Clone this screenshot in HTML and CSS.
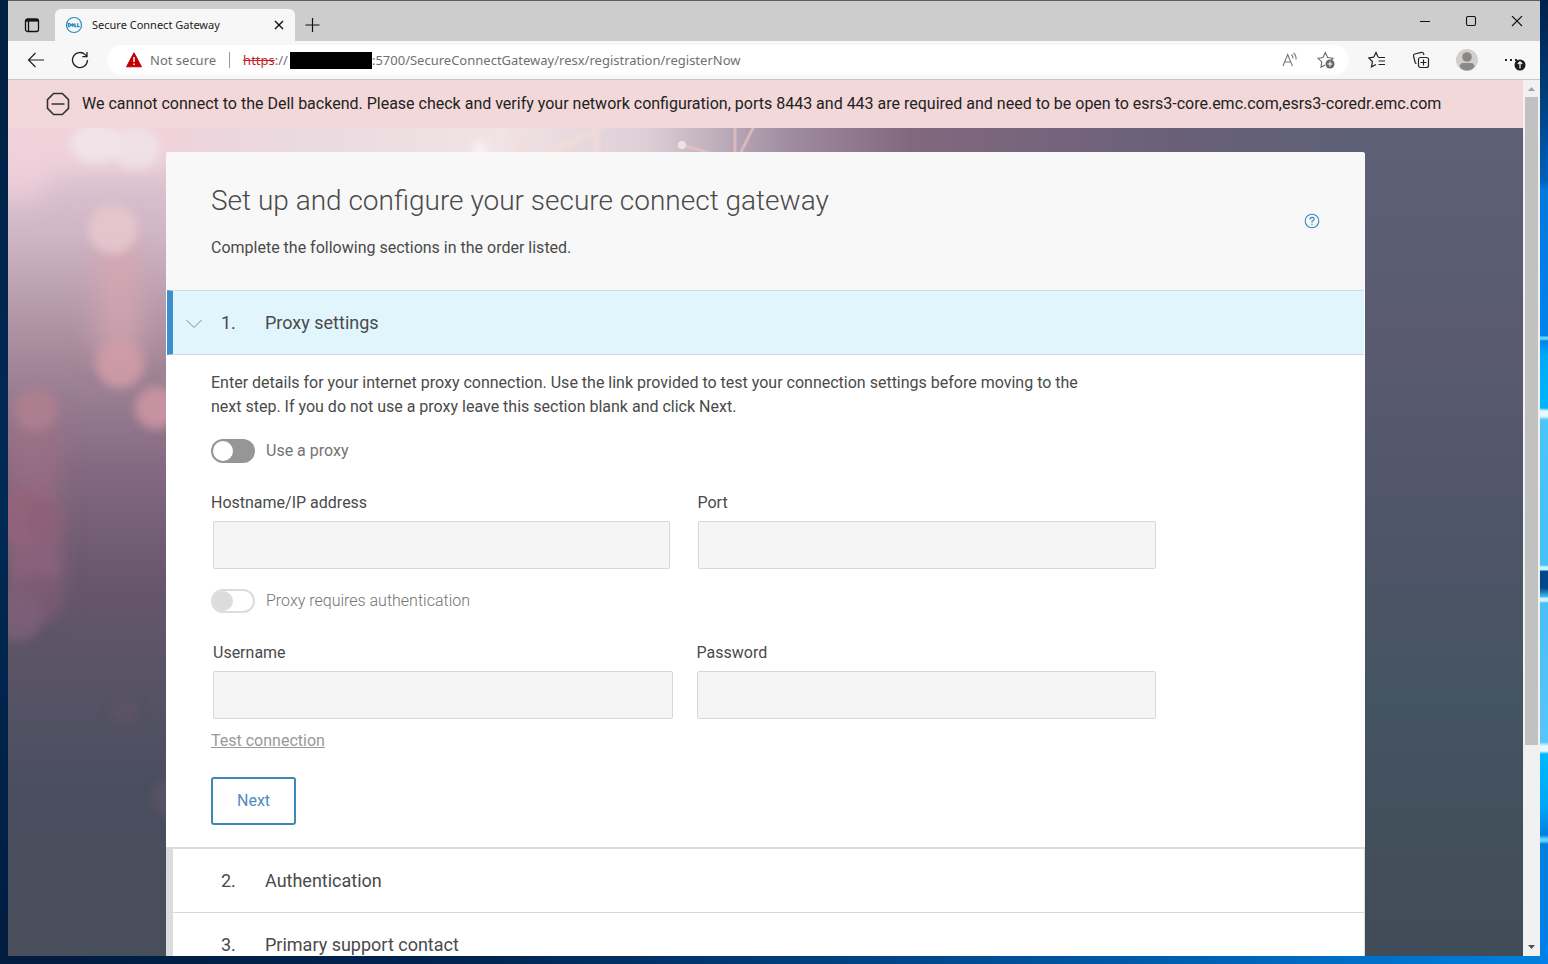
FILE: index.html
```html
<!DOCTYPE html>
<html lang="en">
<head>
    <title>Secure Connect Gateway</title>
    <meta charset="UTF-8">
    <link rel="stylesheet" href="styles.css">
</head>
<body>
    <div class="window">
        <div class="tab-bar">
            <button class="icon-btn tab-actions" aria-label="Tab actions">
                <svg width="16" height="16" viewBox="0 0 16 16" fill="none" stroke="#111" stroke-width="1.3"><rect x="1.5" y="2" width="13" height="12.5" rx="2"/><path d="M2 3.4h12" stroke-width="2.4"/><path d="M4.5 4v10"/></svg>
            </button>
            <div class="tab">
                <svg class="favicon" width="18" height="18" viewBox="0 0 18 18" fill="none" stroke="#2a8cc4"><circle cx="9" cy="9" r="7.5" stroke-width="1.2"/><path stroke-width="1.3" d="M3.4 7.3v3.4h.7q1.4-.2 1.4-1.7t-1.4-1.700zM6.200 9l1.900-1.500M6.200 9l2 1.600M6.800 9.700l2-1.600M7 7.800l2.500 2M10 7.200v3.500h1.700M12.700 7.200v3.500h2"/></svg>
                <span class="tab-title">Secure Connect Gateway</span>
                <button class="icon-btn" aria-label="Close tab">
                    <svg width="16" height="16" viewBox="0 0 16 16" stroke="#111" stroke-width="1.4"><path d="M4 4l8 8M12 4l-8 8"/></svg>
                </button>
            </div>
            <button class="icon-btn new-tab" aria-label="New tab">
                <svg width="16" height="16" viewBox="0 0 16 16" stroke="#111" stroke-width="1.2"><path d="M7.500 1v14M.5 8h14"/></svg>
            </button>
            <div class="window-controls">
                <button class="icon-btn" aria-label="Minimize"><svg width="12" height="12" viewBox="0 0 12 12" stroke="#111"><path d="M1 5.500h10"/></svg></button>
                <button class="icon-btn" aria-label="Maximize"><svg width="12" height="12" viewBox="0 0 12 12" fill="none" stroke="#111" stroke-width="1.1"><rect x="1.500" y=".5" width="9" height="9" rx="1.500"/></svg></button>
                <button class="icon-btn" aria-label="Close"><svg width="12" height="12" viewBox="0 0 12 12" stroke="#111" stroke-width="1.1"><path d="M1 0l10 10M11 0L1 10"/></svg></button>
            </div>
        </div>

        <div class="toolbar">
            <button class="icon-btn" aria-label="Back">
                <svg width="18" height="18" viewBox="0 0 18 18" fill="none" stroke="#222" stroke-width="1.200"><path d="M17 9H1.500M8.500 2l-7 7 7 7"/></svg>
            </button>
            <button class="icon-btn reload" aria-label="Reload">
                <svg width="18" height="18" viewBox="0 0 18 18" fill="none" stroke="#222" stroke-width="1.300"><path d="M16.500 9A7.500 7.500 0 1 1 14.200 3.600L16 5.500M16 1v4.700h-4.700"/></svg>
            </button>
            <div class="address-bar">
                <svg width="16" height="16" viewBox="0 0 16 16"><path d="M8 .8L15.500 14.800H.5z" fill="#c00000" stroke="#c00000" stroke-linejoin="round"/><path d="M8 5v5M8 11.500v1.500" stroke="#fff" stroke-width="1.500"/></svg>
                <span class="not-secure">Not secure</span>
                <span class="url"><s>https</s>://<span class="redacted"></span>:5700/SecureConnectGateway/resx/registration/registerNow</span>
                <button class="icon-btn" aria-label="Read aloud">
                    <svg width="18" height="18" viewBox="0 0 18 18" fill="none" stroke="#777" stroke-width="1.100"><path d="M2 15L6.700 3.500 11.400 15M3.600 11h6.200M10.500 3.500q1.700 1.500 1.500 4M12.500 2q3 2.500 2.500 6.500"/></svg>
                </button>
                <button class="icon-btn" aria-label="Add to favorites">
                    <svg width="18" height="18" viewBox="0 0 18 18" fill="none" stroke="#666" stroke-width="1.100"><path d="M8 14l-4 2.200.8-5.300L1 7.300l5-.8L8.300 1.500l2.300 5 5.400.8-2 2"/><circle cx="13" cy="13" r="4.500" fill="#666" stroke="none"/><path d="M13 10.500v5M10.500 13h5" stroke="#fff"/></svg>
                </button>
            </div>
            <div class="toolbar-actions">
                <button class="icon-btn" aria-label="Favorites">
                    <svg width="18" height="18" viewBox="0 0 18 18" fill="none" stroke="#222" stroke-width="1.200"><path d="M10 6L8 1.500 5.700 6.200.8 7l3.600 3.500-.9 5.300L8 13.500M10 6.500h7M10.500 10h6.500M10.500 13.500h6.500"/></svg>
                </button>
                <button class="icon-btn" aria-label="Collections">
                    <svg width="18" height="18" viewBox="0 0 18 18" fill="none" stroke="#222" stroke-width="1.200"><rect x="6.500" y="6.500" width="10" height="10" rx="2"/><path d="M11.500 8.500v6M8.500 11.500h6M4.500 12.500L3.300 12 1.500 5q-.3-1.500 1.200-2L9.500 1.300q1.500-.3 2 1.200l.5 1.500"/></svg>
                </button>
                <button class="icon-btn" aria-label="Profile">
                    <svg width="22" height="22" viewBox="0 0 22 22"><circle cx="11" cy="11" r="11" fill="#d2d0ce"/><circle cx="11" cy="8" r="4.800" fill="#8a8886"/><path d="M3.500 17.500Q4 14 7 14h8q3 0 3.500 3.500Q16 21.500 11 21.500T3.500 17.500z" fill="#8a8886"/></svg>
                </button>
                <button class="icon-btn" aria-label="Settings and more">
                    <svg width="22" height="22" viewBox="0 0 22 22"><path d="M1 10h2v2H1zM6 10h2v2H6zM11 10h2v2h-2z" fill="#222"/><circle cx="16" cy="16" r="5.500" fill="#1b1b1b"/><path d="M16 19.500v-6.500M13.800 15l2.200-2.200 2.200 2.200" fill="none" stroke="#fff" stroke-width="1.200"/></svg>
                </button>
            </div>
        </div>

        <div class="viewport">
            <div class="page">
                <div class="alert" role="alert">
                    <svg width="24" height="24" viewBox="0 0 24 24" fill="none" stroke="#333" stroke-width="1.600"><path d="M7.600 1.500h8.800l6.100 6.100v8.800l-6.100 6.100H7.600l-6.100-6.100V7.600zM5.500 12h13"/></svg>
                    <span>We cannot connect to the Dell backend. Please check and verify your network configuration, ports 8443 and 443 are required and need to be open to esrs3-core.emc.com,esrs3-coredr.emc.com</span>
                </div>

                <div class="stage">
                    <svg class="backdrop" viewBox="0 0 1515 828" preserveAspectRatio="xMinYMin slice" aria-hidden="true">
                        <defs>
                            <linearGradient id="leftSky" x1="0" y1="0" x2="0" y2="1">
                                <stop offset="0" stop-color="#e6ced8"/><stop offset=".13" stop-color="#cfb6c6"/><stop offset=".28" stop-color="#a48799"/><stop offset=".42" stop-color="#826880"/><stop offset=".55" stop-color="#67566c"/><stop offset=".68" stop-color="#565365"/><stop offset=".8" stop-color="#4a4e5f"/><stop offset="1" stop-color="#484e5b"/>
                            </linearGradient>
                            <linearGradient id="rightSky" x1="0" y1="0" x2="0" y2="1">
                                <stop offset="0" stop-color="#5d6077"/><stop offset=".28" stop-color="#595a70"/><stop offset=".5" stop-color="#4e5568"/><stop offset=".68" stop-color="#455462"/><stop offset="1" stop-color="#404c57"/>
                            </linearGradient>
                            <linearGradient id="topGlow">
                                <stop offset="0" stop-color="#efd3db"/><stop offset=".1" stop-color="#ead9df"/><stop offset=".28" stop-color="#f1e3e5"/><stop offset=".4" stop-color="#ddcfd6"/><stop offset=".52" stop-color="#a08ca0"/><stop offset=".62" stop-color="#82687f"/><stop offset=".85" stop-color="#686078"/><stop offset="1" stop-color="#5d6077"/>
                            </linearGradient>
                            <filter id="soft" x="-50%" y="-50%" width="200%" height="200%"><feGaussianBlur stdDeviation="5"/></filter>
                            <filter id="softer" x="-50%" y="-50%" width="200%" height="200%"><feGaussianBlur stdDeviation="13"/></filter>
                            <filter id="faint" x="-50%" y="-200%" width="200%" height="500%"><feGaussianBlur stdDeviation="2"/></filter>
                        </defs>
                        <rect width="1000" height="828" fill="url(#leftSky)"/>
                        <rect x="1000" width="515" height="828" fill="url(#rightSky)"/>
                        <rect x="158" width="1199" height="30" fill="url(#topGlow)"/>
                        <g filter="url(#softer)">
                            <path d="M-20-20H180V42H-20z" fill="#f0d2da"/>
                            <circle cx="10" cy="40" r="34" fill="#f0d0d9" opacity=".8"/>
                            <path d="M88 110h46v120H88z" fill="#d7a5b1" opacity=".7"/>
                            <path d="M0 290h50v190H0z" fill="#a96f85" opacity=".5"/>
                        </g>
                        <g filter="url(#soft)">
                            <ellipse cx="88" cy="15" rx="26" ry="20" fill="#f0e9eb" opacity=".8"/>
                            <ellipse cx="128" cy="20" rx="24" ry="22" fill="#f0e7e9" opacity=".7"/>
                            <circle cx="105" cy="101" r="25" fill="#e5c7cd" opacity=".9"/>
                            <circle cx="112" cy="236" r="24" fill="#cf9ba7" opacity=".9"/>
                            <circle cx="148" cy="280" r="21" fill="#cb95a3" opacity=".9"/>
                            <circle cx="28" cy="282" r="22" fill="#b1808f" opacity=".8"/>
                            <circle cx="16" cy="388" r="27" fill="#93627a" opacity=".8"/>
                            <circle cx="37" cy="394" r="20" fill="#8a5f77" opacity=".6"/>
                            <circle cx="30" cy="435" r="23" fill="#8a607a" opacity=".8"/>
                            <circle cx="30" cy="470" r="24" fill="#785a72" opacity=".7"/>
                            <circle cx="10" cy="488" r="25" fill="#7e6079" opacity=".8"/>
                            <circle cx="117" cy="582" r="14" fill="#64546a" opacity=".5"/>
                            <circle cx="162" cy="670" r="18" fill="#605669" opacity=".7"/>
                            <circle cx="472" cy="22" r="9" fill="#fbf4f3" opacity=".8"/>
                        </g>
                        <g fill="none" stroke="#f5dcda" opacity=".7">
                            <path d="M500-5l22 32M595-2l-55 28M588 0v28" stroke-width="7" filter="url(#faint)"/>
                            <path d="M674 17l34 10M727-2v28M746-2l-14 28" stroke="#ecc3bf" stroke-width="3"/>
                            <circle cx="674" cy="17" r="4" fill="#fff0ed" stroke="none"/>
                        </g>
                    </svg>

                    <div class="card">
                        <div class="card-header">
                            <div>
                                <h1>Set up and configure your secure connect gateway</h1>
                                <p>Complete the following sections in the order listed.</p>
                            </div>
                            <button class="icon-btn" aria-label="Help">
                                <svg width="16" height="16" viewBox="0 0 16 16" fill="none" stroke="#2f88b5" stroke-width="1.100"><circle cx="8" cy="8" r="6.800"/><path d="M5.900 6.500q0-2.100 2.100-2.100t2.100 1.900Q10.100 7.500 8 8.200V9.700M8 10.800V12"/></svg>
                            </button>
                        </div>

                        <div class="step active">
                            <svg class="chevron" width="16" height="16" viewBox="0 0 16 16" fill="none" stroke="#888"><path d="M.5 5L8 12.500 15.500 5"/></svg>
                            <span class="step-number">1.</span>
                            <h2>Proxy settings</h2>
                        </div>

                        <form class="step-body">
                            <p class="intro">Enter details for your internet proxy connection. Use the link provided to test your connection settings before moving to the next step. If you do not use a proxy leave this section blank and click Next.</p>
                            <label class="switch">
                                <input type="checkbox" id="useProxy">
                                <span>Use a proxy</span>
                            </label>
                            <div class="field-row">
                                <div class="field host-field">
                                    <label for="hostname">Hostname/IP address</label>
                                    <input type="text" id="hostname" disabled>
                                </div>
                                <div class="field">
                                    <label for="port">Port</label>
                                    <input type="text" id="port" disabled>
                                </div>
                            </div>
                            <label class="switch">
                                <input type="checkbox" id="proxyAuth" disabled>
                                <span>Proxy requires authentication</span>
                            </label>
                            <div class="field-row credentials">
                                <div class="field">
                                    <label for="username">Username</label>
                                    <input type="text" id="username" disabled>
                                </div>
                                <div class="field">
                                    <label for="password">Password</label>
                                    <input type="password" id="password" disabled>
                                </div>
                            </div>
                            <a class="test-link" href="#">Test connection</a>
                            <button type="button" class="next-btn">Next</button>
                        </form>

                        <div class="step first">
                            <span class="step-number">2.</span>
                            <h2>Authentication</h2>
                        </div>
                        <div class="step">
                            <span class="step-number">3.</span>
                            <h2>Primary support contact</h2>
                        </div>
                    </div>
                </div>
            </div>

            <div class="scrollbar" aria-hidden="true">
                <svg width="17" height="17" viewBox="0 0 17 17"><path d="M5 11l3.500-4 3.500 4z" fill="#a0a0a0"/></svg>
                <div class="track"><div class="thumb"></div></div>
                <svg width="17" height="17" viewBox="0 0 17 17"><path d="M5 6l3.500 4L12 6z" fill="#505050"/></svg>
            </div>
        </div>
    </div>
</body>
</html>
```

FILE: styles.css
```css
* {
    box-sizing: border-box;
}

body {
    height: 100vh;
    margin: 0;
    padding: 0 8px 8px;
    overflow: hidden;
    font-family: Roboto, sans-serif;
    font-size: 16px;
    line-height: 24px;
    color: #4a4a4a;
    /* right strip, bottom strip, left strip */
    background:
        linear-gradient(to bottom, #00204a, #003c78 90px, #0060b8 180px, #0078e0 190px, #0084ea 336px, #5cd8ff 337px, #5cd8ff 339px, #0084ea 341px, #00aaf5 355px, #00b4ff 408px, #e8faff 411px, #e8faff 416px, #4cc4f8 420px, #48bff5 565px, #c8f4ff 567px, #c8f4ff 570px, #00488c 571px, #00488c 588px, #48bff5 597px, #c8f4ff 598px, #c8f4ff 601px, #48bff5 603px, #58c4fa 742px, #e8faff 746px, #e8faff 751px, #00b8ff 754px, #00a8f8 805px, #0080e0 835px, #5cd8ff 839px, #5cd8ff 841px, #0080e0 844px, #0080e8) right top / 8px 100% no-repeat,
        linear-gradient(to right, #001c3e, #002450 30%, #00488c 60%, #0064b8 80%, #0080e0) left bottom / 100% 8px no-repeat,
        linear-gradient(to bottom, #001f42, #002a55 50%, #001c3e);
}

h1, h2, p {
    margin: 0;
    font-weight: 400;
}

.icon-btn {
    display: flex;
    padding: 0;
    border: none;
    background: none;
    cursor: pointer;
}

.window {
    display: flex;
    flex-direction: column;
    height: 100%;
    border-top: 1px solid #5e5c60;
    background: #f7f7f7;
}

/* Browser bars */
.tab-bar {
    display: flex;
    align-items: center;
    height: 40px;
    padding-top: 8px;
    background: #cdcdcd;
}

.tab-actions {
    margin: 0 15px 0 16px;
}

.tab {
    display: flex;
    align-items: center;
    align-self: stretch;
    width: 240px;
    padding: 0 8px 0 10px;
    border-radius: 6px 6px 0 0;
    background: #f7f7f7;
    font-family: "Noto Sans", sans-serif;
    font-size: 11px;
    color: #222;
}

.tab-title {
    flex: 1;
    margin-left: 9px;
}

.new-tab {
    margin-left: 10px;
}

.window-controls {
    display: flex;
    gap: 34px;
    margin: 0 17px 6px auto;
}

.toolbar {
    display: flex;
    align-items: center;
    height: 39px;
    padding-left: 19px;
    border-bottom: 1px solid #c8c8c8;
}

.reload {
    margin: 0 18px 0 26px;
}

.address-bar {
    display: flex;
    flex: 1;
    align-items: center;
    height: 30px;
    padding: 0 14px 0 19px;
    border-radius: 15px;
    background: #fff;
    font-family: "Noto Sans", sans-serif;
    font-size: 13px;
    color: #707070;
}

.not-secure {
    margin: 0 13px 0 8px;
    padding-right: 13px;
    border-right: 1px solid #999;
    line-height: 16px;
}

.url {
    display: flex;
    flex: 1;
    align-items: center;
}

.url s {
    color: #c5221f;
}

.redacted {
    width: 82px;
    height: 17px;
    margin-left: 2px;
    background: #000;
}

.address-bar .icon-btn {
    margin-left: 18px;
}

.toolbar-actions {
    display: flex;
    align-items: center;
    gap: 26px;
    padding: 0 14px 0 19px;
}

.viewport {
    display: flex;
    flex: 1;
    min-height: 0;
}

.page {
    display: flex;
    flex: 1;
    flex-direction: column;
    overflow: hidden;
}

.alert {
    display: flex;
    flex-shrink: 0;
    align-items: center;
    gap: 12px;
    height: 48px;
    padding: 0 38px;
    background: #f3d8d9;
    color: #222;
    white-space: nowrap;
}

.stage {
    position: relative;
    flex: 1;
    min-height: 0;
    padding: 24px 24px 0;
    overflow: hidden;
}

.backdrop {
    position: absolute;
    top: 0;
    left: 0;
    width: 100%;
    height: 100%;
}

/* Setup card */
.card {
    position: relative;
    max-width: 1199px;
    margin: 0 auto;
    border-radius: 3px 3px 0 0;
    background: #fff;
    overflow: hidden;
}

.card-header {
    display: flex;
    align-items: center;
    justify-content: space-between;
    padding: 29px 45px 30px;
    background: #f8f8f8;
}

.card-header h1 {
    margin-bottom: 15px;
    font-size: 28px;
    font-weight: 300;
    line-height: 40px;
}

.step {
    display: flex;
    align-items: center;
    height: 64px;
    padding-left: 48px;
    border-left: 7px solid #dcdcde;
    border-right: 1px solid #dcdcde;
    border-bottom: 1px solid #d6dadc;
    font-size: 18px;
}

.step.active {
    height: 65px;
    margin: 0 1px;
    padding-left: 13px;
    border-top: 1px solid #d6dadc;
    border-left: 6px solid #3f8fd0;
    border-right: none;
    background: #e1f5fd;
}

.step.first {
    height: 66px;
    border-top: 2px solid #dcdcde;
}

.chevron {
    margin-right: 19px;
}

.step-number {
    width: 44px;
}

.step h2 {
    font-size: 18px;
}

.step-body {
    padding: 16px 45px 22px;
}

.intro {
    max-width: 890px;
    margin-bottom: 20px;
}

.switch {
    display: flex;
    align-items: center;
    gap: 11px;
    color: #737373;
}

.switch input {
    display: flex;
    width: 44px;
    height: 24px;
    margin: 0;
    padding: 2px;
    border-radius: 12px;
    background: #969696;
    appearance: none;
}

.switch input::before {
    content: "";
    width: 20px;
    height: 20px;
    border-radius: 50%;
    background: #fff;
}

.switch input:disabled {
    padding: 0;
    border: 2px solid #dcdcdc;
    background: #fff;
}

.switch input:disabled::before {
    background: #dcdcdc;
}

.switch input:disabled + span {
    font-weight: 300;
}

.field-row {
    display: grid;
    grid-template-columns: 1fr 1fr;
    gap: 28px;
    max-width: 945px;
    margin: 28px 0 20px;
}

.field-row.credentials {
    gap: 24px;
    margin-bottom: 10px;
    padding-left: 2px;
}

.host-field {
    padding-right: 2px;
}

.field label {
    display: block;
    margin-bottom: 6px;
}

.field input {
    display: block;
    width: 100%;
    height: 48px;
    margin: 0;
    padding: 0 12px;
    border: 1px solid #d8d8d8;
    border-radius: 2px;
    background: #f5f5f5;
    font: inherit;
}

.host-field input {
    margin-left: 2px;
}

.test-link {
    color: #999;
}

.next-btn {
    display: block;
    height: 48px;
    margin-top: 24px;
    padding: 0 24px;
    border: 2px solid #3e88b8;
    border-radius: 3px;
    background: #fff;
    color: #4f8cc0;
    font: inherit;
    cursor: pointer;
}

/* Page scrollbar */
.scrollbar {
    display: flex;
    flex-direction: column;
    width: 17px;
    background: #f1f1f1;
}

.track {
    flex: 1;
    padding: 0 2px;
}

.thumb {
    height: 77%;
    background: #c1c1c1;
}
```
